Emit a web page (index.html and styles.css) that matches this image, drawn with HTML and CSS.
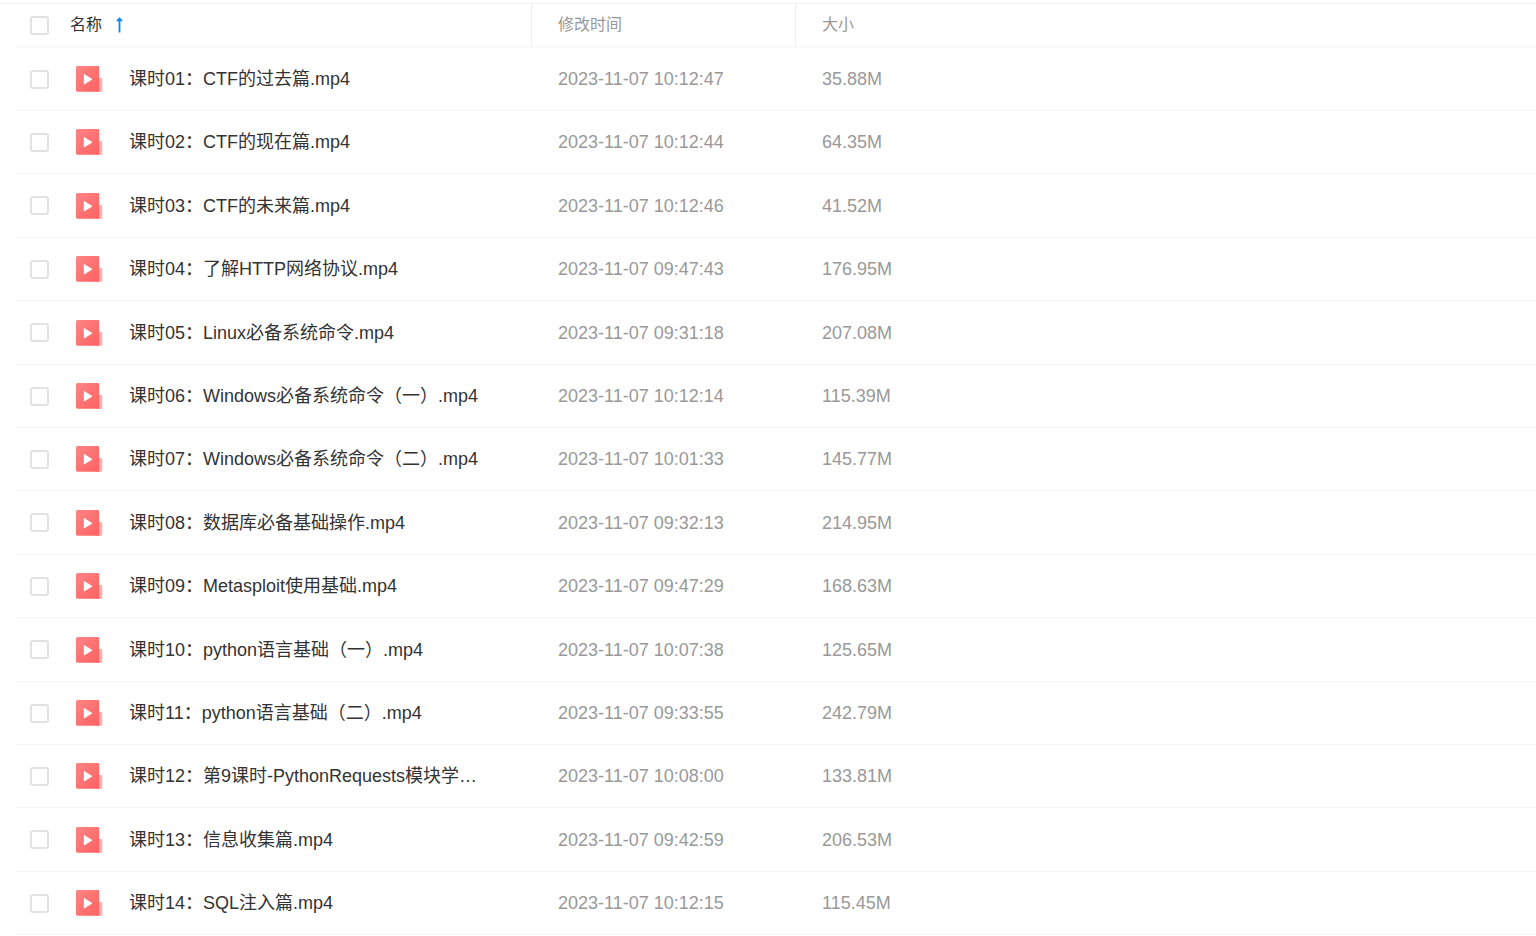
FILE: index.html
```
<!DOCTYPE html>
<html lang="zh-CN">
<head>
<meta charset="utf-8">
<meta name="viewport" content="width=device-width, initial-scale=1">
<title>文件列表</title>
<link rel="stylesheet" href="styles.css">
</head>
<body>
<svg class="defs" width="0" height="0" aria-hidden="true">
  <defs>
    <linearGradient id="red" x1="0" y1="0" x2="1" y2="1">
      <stop offset="0" stop-color="#ff8586"/>
      <stop offset="1" stop-color="#ff6060"/>
    </linearGradient>
    <symbol id="video" viewBox="0 0 27 26">
      <path d="M22 12h3.300a1 1 0 0 1 1 1v11.500a1.200 1.200 0 0 1-1.200 1.200H20z" fill="#ffb0b0"/>
      <path d="M1.300 0H21.800a1.400 1.400 0 0 1 1.400 1.400V24.200a1.500 1.500 0 0 0 .8 1.500H1.300A1.400 1.400 0 0 1 0 24.300V1.400A1.400 1.400 0 0 1 1.300 0z" fill="url(#red)"/>
      <path d="M7.800 8.600v9.200q0 .8.700.4l7.300-4.500q.7-.5 0-1l-7.300-4.500q-.7-.4-.7.400z" fill="#fff"/>
    </symbol>
  </defs>
</svg>
<main class="list">
  <table class="files">
    <colgroup><col class="c-check"><col class="c-name"><col class="c-time"><col class="c-size"></colgroup>
    <thead>
      <tr>
        <th class="check"><input type="checkbox" aria-label="全选"></th>
        <th class="head-name"><button class="sort" type="button">名称
          <svg class="arrow" width="7" height="16" viewBox="0 0 7 16" aria-hidden="true"><path d="M3.500 15.500V2M1 4.200L3.500 1.500L6 4.200" fill="none" stroke="#0a84ff" stroke-width="1.800"/></svg></button></th>
        <th class="divided">修改时间</th>
        <th class="divided">大小</th>
      </tr>
    </thead>
    <tbody>
      <tr><td class="check"><input type="checkbox" aria-labelledby="f1"></td><td><div class="file"><svg class="icon" aria-hidden="true"><use href="#video"/></svg><a id="f1" href="#f1">课时01：CTF的过去篇.mp4</a></div></td><td class="meta">2023-11-07 10:12:47</td><td class="meta">35.88M</td></tr>
      <tr><td class="check"><input type="checkbox" aria-labelledby="f2"></td><td><div class="file"><svg class="icon" aria-hidden="true"><use href="#video"/></svg><a id="f2" href="#f2">课时02：CTF的现在篇.mp4</a></div></td><td class="meta">2023-11-07 10:12:44</td><td class="meta">64.35M</td></tr>
      <tr><td class="check"><input type="checkbox" aria-labelledby="f3"></td><td><div class="file"><svg class="icon" aria-hidden="true"><use href="#video"/></svg><a id="f3" href="#f3">课时03：CTF的未来篇.mp4</a></div></td><td class="meta">2023-11-07 10:12:46</td><td class="meta">41.52M</td></tr>
      <tr><td class="check"><input type="checkbox" aria-labelledby="f4"></td><td><div class="file"><svg class="icon" aria-hidden="true"><use href="#video"/></svg><a id="f4" href="#f4">课时04：了解HTTP网络协议.mp4</a></div></td><td class="meta">2023-11-07 09:47:43</td><td class="meta">176.95M</td></tr>
      <tr><td class="check"><input type="checkbox" aria-labelledby="f5"></td><td><div class="file"><svg class="icon" aria-hidden="true"><use href="#video"/></svg><a id="f5" href="#f5">课时05：Linux必备系统命令.mp4</a></div></td><td class="meta">2023-11-07 09:31:18</td><td class="meta">207.08M</td></tr>
      <tr><td class="check"><input type="checkbox" aria-labelledby="f6"></td><td><div class="file"><svg class="icon" aria-hidden="true"><use href="#video"/></svg><a id="f6" href="#f6">课时06：Windows必备系统命令（一）.mp4</a></div></td><td class="meta">2023-11-07 10:12:14</td><td class="meta">115.39M</td></tr>
      <tr><td class="check"><input type="checkbox" aria-labelledby="f7"></td><td><div class="file"><svg class="icon" aria-hidden="true"><use href="#video"/></svg><a id="f7" href="#f7">课时07：Windows必备系统命令（二）.mp4</a></div></td><td class="meta">2023-11-07 10:01:33</td><td class="meta">145.77M</td></tr>
      <tr><td class="check"><input type="checkbox" aria-labelledby="f8"></td><td><div class="file"><svg class="icon" aria-hidden="true"><use href="#video"/></svg><a id="f8" href="#f8">课时08：数据库必备基础操作.mp4</a></div></td><td class="meta">2023-11-07 09:32:13</td><td class="meta">214.95M</td></tr>
      <tr><td class="check"><input type="checkbox" aria-labelledby="f9"></td><td><div class="file"><svg class="icon" aria-hidden="true"><use href="#video"/></svg><a id="f9" href="#f9">课时09：Metasploit使用基础.mp4</a></div></td><td class="meta">2023-11-07 09:47:29</td><td class="meta">168.63M</td></tr>
      <tr><td class="check"><input type="checkbox" aria-labelledby="f10"></td><td><div class="file"><svg class="icon" aria-hidden="true"><use href="#video"/></svg><a id="f10" href="#f10">课时10：python语言基础（一）.mp4</a></div></td><td class="meta">2023-11-07 10:07:38</td><td class="meta">125.65M</td></tr>
      <tr><td class="check"><input type="checkbox" aria-labelledby="f11"></td><td><div class="file"><svg class="icon" aria-hidden="true"><use href="#video"/></svg><a id="f11" href="#f11">课时11：python语言基础（二）.mp4</a></div></td><td class="meta">2023-11-07 09:33:55</td><td class="meta">242.79M</td></tr>
      <tr><td class="check"><input type="checkbox" aria-labelledby="f12"></td><td><div class="file"><svg class="icon" aria-hidden="true"><use href="#video"/></svg><a id="f12" href="#f12">课时12：第9课时-PythonRequests模块学…</a></div></td><td class="meta">2023-11-07 10:08:00</td><td class="meta">133.81M</td></tr>
      <tr><td class="check"><input type="checkbox" aria-labelledby="f13"></td><td><div class="file"><svg class="icon" aria-hidden="true"><use href="#video"/></svg><a id="f13" href="#f13">课时13：信息收集篇.mp4</a></div></td><td class="meta">2023-11-07 09:42:59</td><td class="meta">206.53M</td></tr>
      <tr><td class="check"><input type="checkbox" aria-labelledby="f14"></td><td><div class="file"><svg class="icon" aria-hidden="true"><use href="#video"/></svg><a id="f14" href="#f14">课时14：SQL注入篇.mp4</a></div></td><td class="meta">2023-11-07 10:12:15</td><td class="meta">115.45M</td></tr>
    </tbody>
  </table>
</main>
</body>
</html>
```

FILE: styles.css
```
* { box-sizing: border-box; }

body {
  margin: 0;
  background: #fff;
  color: #333;
  font: 18px/24px "Liberation Sans", "Noto Sans CJK SC", sans-serif;
}

.defs { display: block; }

.list {
  margin-top: 3px;
  padding-left: 15px;
  border-top: 1px solid #f3f3f3;
}

.files {
  width: 100%;
  border-collapse: separate;
  border-spacing: 0;
  table-layout: fixed;
}

.c-check { width: 55px; }
.c-name { width: 461px; }
.c-time { width: 264px; }

th, td {
  padding: 0;
  text-align: left;
  vertical-align: middle;
}

th {
  height: 44px;
  border-bottom: 2px solid #f9f9f9;
  color: #999;
  font-size: 16px;
  font-weight: 400;
}

td {
  height: 63px;
  border-bottom: 1px solid #f5f5f5;
}

/* Spare pixel keeps the row rhythm between 63 and 64 */
tbody tr:nth-child(5n + 3) td,
tbody tr:nth-child(5n + 5) td { height: 64px; }

.divided {
  padding-left: 26px;
  border-left: 1px solid #eee;
}

.meta {
  padding-left: 27px;
  color: #999;
}

.check { padding-left: 15px; }

.check input {
  display: block;
  width: 19px;
  height: 19px;
  margin: 0;
  border: 2px solid #e2e2e2;
  border-radius: 3px;
  background: #fff;
  appearance: none;
}

.check input:checked {
  border-color: #0a84ff;
  background: #0a84ff;
}

.sort {
  display: flex;
  align-items: center;
  gap: 14px;
  padding: 0;
  border: 0;
  background: none;
  color: #333;
  font: inherit;
}

.file {
  display: flex;
  align-items: center;
  gap: 26px;
  padding: 0 20px 0 6px;
}

.icon {
  flex: none;
  width: 27px;
  height: 26px;
}

.file a {
  overflow: hidden;
  color: inherit;
  text-decoration: none;
  text-overflow: ellipsis;
  white-space: nowrap;
}
```
